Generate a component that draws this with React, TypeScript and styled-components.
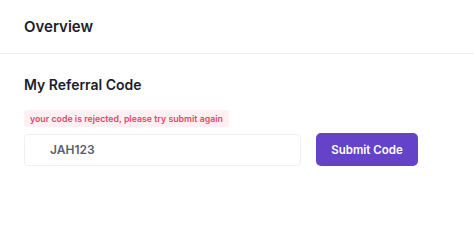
import styled, { createGlobalStyle } from "styled-components";

const GlobalStyle = createGlobalStyle`
  body {
    margin: 0;
    background: #ffffff;
    font-family: Inter, "Noto Sans", sans-serif;
  }
`;

const Page = styled.div`
  width: 474px;
  height: 200px;
  background: #ffffff;
`;

const Header = styled.header`
  height: 53px;
  display: flex;
  align-items: center;
  padding: 0 24px;
  border-bottom: 1px solid #efeff1;
`;

const PageTitle = styled.h1`
  margin: 0;
  font-size: 15px;
  font-weight: 600;
  color: #1c1d2b;
`;

const Section = styled.section`
  padding: 20px 24px 0;
`;

const SectionTitle = styled.h2`
  margin: 0;
  font-size: 14px;
  line-height: 22px;
  font-weight: 600;
  color: #1c1d2b;
`;

const ErrorBadge = styled.div`
  display: inline-block;
  margin-top: 14px;
  padding: 2px 6px;
  background: #fff1f3;
  border-radius: 3px;
  color: #e8456b;
  font-size: 8.8px;
  line-height: 13px;
  font-weight: 600;
`;

const Row = styled.div`
  margin-top: 6px;
  display: flex;
  align-items: center;
  gap: 16px;
`;

const CodeInput = styled.input`
  box-sizing: border-box;
  width: 277px;
  height: 32px;
  padding: 0 25px;
  border: 1px solid #f0f0f2;
  border-radius: 4px;
  background: #ffffff;
  font-family: inherit;
  font-size: 12px;
  font-weight: 600;
  color: #5c5e6e;
  outline: none;
`;

const SubmitButton = styled.button`
  box-sizing: border-box;
  width: 102px;
  height: 33px;
  margin-left: -1px;
  border: none;
  border-radius: 5px;
  background: #6443c8;
  color: #ffffff;
  font-family: inherit;
  font-size: 11.5px;
  font-weight: 600;
  cursor: pointer;
`;

export default function App() {
  return (
    <Page>
      <GlobalStyle />
      <Header>
        <PageTitle>Overview</PageTitle>
      </Header>
      <Section>
        <SectionTitle>My Referral Code</SectionTitle>
        <ErrorBadge>your code is rejected, please try submit again</ErrorBadge>
        <Row>
          <CodeInput defaultValue="JAH123" />
          <SubmitButton>Submit Code</SubmitButton>
        </Row>
      </Section>
    </Page>
  );
}
